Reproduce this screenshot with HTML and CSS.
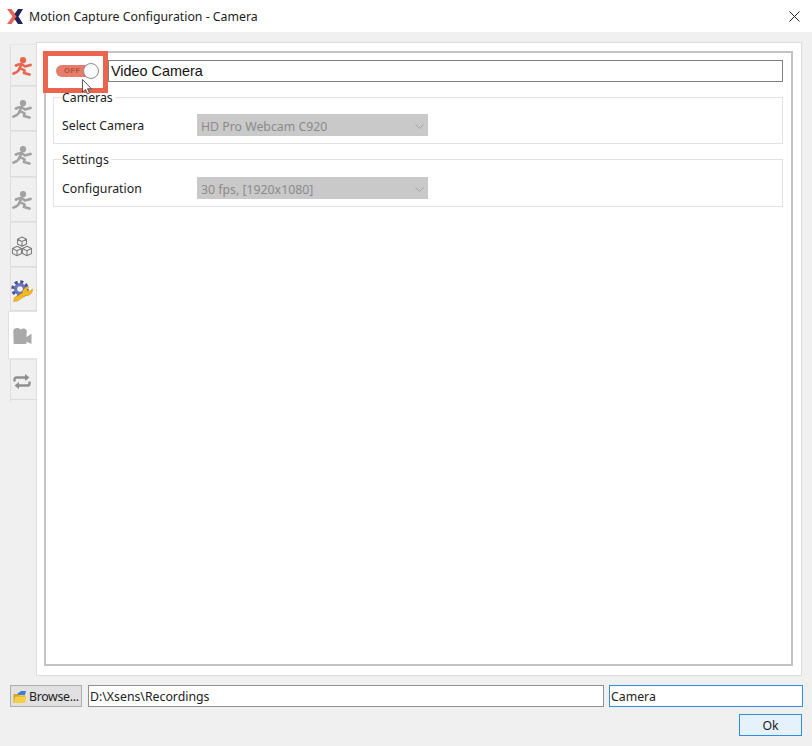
FILE: index.html
```html
<!DOCTYPE html>
<html lang="en">
<head>
<meta charset="utf-8">
<title>Motion Capture Configuration - Camera</title>
<link rel="stylesheet" href="styles.css">
</head>
<body>
<svg class="defs" width="0" height="0">
  <symbol id="runner" viewBox="0 0 20 20">
    <circle cx="11" cy="3.200" r="3.100" fill="currentColor"/>
    <path d="M9.500 7 Q6.500 7 4 8.500 M9.500 7 L7.500 11.500 Q11 12 12.500 13.500 L12 16 L17.500 17.500 M9.500 7 L13 9.500 L18.500 8 M7.500 11.500 Q6.500 15 1.500 16.500" fill="none" stroke="currentColor" stroke-width="2.700" stroke-linejoin="round" stroke-linecap="round"/>
  </symbol>
</svg>
<header class="titlebar">
  <svg class="logo" viewBox="0 0 16 15" width="16" height="15">
    <path d="M0 0 H4.500 L10 7.500 L4.500 15 H0 L5.500 7.500 Z" fill="#e9654f"/>
    <path d="M11 0 H16 L11.500 7.500 L16 15 H11 L7.500 10 L9.500 7.500 L7.500 5 Z" fill="#1f2557"/>
  </svg>
  <span class="title">Motion Capture Configuration - Camera</span>
  <svg class="close" viewBox="0 0 11 11" width="11" height="11"><path d="M0.500 0.500 L10.500 10.500 M10.500 0.500 L0.500 10.500" stroke="#222" stroke-width="1" fill="none"/></svg>
</header>

<main class="workspace">
  <nav class="tabs">
    <div class="tab tab-red"><svg class="ico-run"><use href="#runner"/></svg></div>
    <div class="tab"><svg class="ico-run"><use href="#runner"/></svg></div>
    <div class="tab"><svg class="ico-run"><use href="#runner"/></svg></div>
    <div class="tab"><svg class="ico-run"><use href="#runner"/></svg></div>
    <div class="tab">
      <svg class="ico" viewBox="0 0 22 21" width="22" height="21" fill="none" stroke="#7f7f7f" stroke-width="1.100" stroke-linejoin="round">
        <path d="M11 1 L15.500 3.200 V8 L11 10.200 L6.500 8 V3.200 Z M6.500 3.200 L11 5.500 L15.500 3.200 M11 5.500 V10.200"/>
        <path d="M6 10.200 L10.500 12.400 V17.500 L6 19.800 L1.500 17.500 V12.400 Z M1.500 12.400 L6 14.700 L10.500 12.400 M6 14.700 V19.800"/>
        <path d="M16 10.200 L20.500 12.400 V17.500 L16 19.800 L11.500 17.500 V12.400 Z M11.500 12.400 L16 14.700 L20.500 12.400 M16 14.700 V19.800"/>
      </svg>
    </div>
    <div class="tab">
      <svg class="ico" viewBox="0 0 22 22" width="22" height="22">
        <circle cx="9" cy="9" r="7" fill="none" stroke="#4a5199" stroke-width="3.500" stroke-dasharray="3 2.500"/>
        <circle cx="9" cy="9" r="6" fill="#6a74b8"/>
        <circle cx="9" cy="9" r="2.800" fill="#eef0fa"/>
        <path d="M2.500 21.500 L3.500 17.500 L11.500 13 C11.500 9 15 6.500 18 7 L15.800 10 L18 11.800 L21.500 9 C22 12.500 18.500 16.500 14.500 15.500 L6.500 21 Z" fill="#f5b921" stroke="#cf8f12" stroke-width="0.500"/>
      </svg>
    </div>
    <div class="tab tab-active">
      <svg class="ico" viewBox="0 0 19 16" width="19" height="16">
        <circle cx="4.200" cy="4" r="4" fill="#a9a9a9"/>
        <circle cx="10.300" cy="4" r="3.600" fill="#a9a9a9"/>
        <rect x="0.500" y="5.500" width="13" height="10.500" rx="1" fill="#a9a9a9"/>
        <path d="M13 9.500 L18.500 5.500 V16 L13 13.500 Z" fill="#a9a9a9"/>
      </svg>
    </div>
    <div class="tab">
      <svg class="ico" viewBox="0 0 18 15" width="18" height="15" fill="none" stroke="#8f8f8f" stroke-width="2.400">
        <path d="M1.500 7.500 V5.500 Q1.500 3.500 3.500 3.500 H12.500"/>
        <path d="M16.500 7.500 V9.500 Q16.500 11.500 14.500 11.500 H5.500"/>
        <path d="M12 0 L16.500 3.500 L12 7 Z M6 8 L1.500 11.500 L6 15 Z" fill="#8f8f8f" stroke="none"/>
      </svg>
    </div>
  </nav>

  <section class="pane">
    <div class="page">
      <div class="header-row">
        <div class="toggle"><span class="toggle-off">OFF</span><span class="knob"></span></div>
        <div class="name-input">Video Camera</div>
      </div>

      <div class="group group-cameras">
        <span class="legend">Cameras</span>
        <span class="label">Select Camera</span>
        <div class="combo"><span>HD Pro Webcam C920</span><svg viewBox="0 0 9 5" width="9" height="5"><path d="M0.500 0.500 L4.500 4.500 L8.500 0.500" fill="none" stroke="#a3a3a3"/></svg></div>
      </div>

      <div class="group group-settings">
        <span class="legend">Settings</span>
        <span class="label">Configuration</span>
        <div class="combo"><span>30 fps, [1920x1080]</span><svg viewBox="0 0 9 5" width="9" height="5"><path d="M0.500 0.500 L4.500 4.500 L8.500 0.500" fill="none" stroke="#a3a3a3"/></svg></div>
      </div>
    </div>
  </section>
</main>

<footer class="footer">
  <div class="path-row">
    <div class="browse">
      <svg viewBox="0 0 14 14" width="14" height="14">
        <path d="M4 4 L8 1 L13 1 L12 5 H4 Z" fill="#3f7fd0"/>
        <path d="M0.500 4 H5 L6 5.500 H12 V13 H0.500 Z" fill="#d9a520"/>
        <path d="M2.500 6.500 H13.500 L12 13 H0.500 Z" fill="#f7cf45"/>
      </svg>
      <span>Browse...</span>
    </div>
    <div class="field field-path">D:\Xsens\Recordings</div>
    <div class="field field-name">Camera</div>
  </div>
  <div class="ok-row"><div class="ok">Ok</div></div>
</footer>

<div class="highlight"></div>
<svg class="cursor" viewBox="0 0 11 16" width="11" height="16"><path d="M0.500 0.500 V13 L3.500 10.500 L5.500 15 L7.500 14 L5.500 9.800 H9.500 Z" fill="#fff" stroke="#333" stroke-width="0.800"/></svg>
</body>
</html>
```
FILE: styles.css
```css
* { box-sizing: border-box; }
html, body { margin: 0; padding: 0; }
body {
  position: relative;
  width: 812px;
  height: 746px;
  overflow: hidden;
  background: #f0f0f0;
  font-family: "Noto Sans", "Open Sans", sans-serif;
  font-size: 12.3px;
  color: #222;
  display: flex;
  flex-direction: column;
}
.defs { position: absolute; }

.titlebar {
  height: 32px;
  flex: none;
  background: #fff;
  display: flex;
  align-items: center;
  padding: 0 12px 0 7px;
}
.logo { flex: none; margin-right: 6px; }
.title { flex: 1; color: #1c1c1c; }
.close { flex: none; }

.workspace {
  flex: none;
  height: 644px;
  display: flex;
  padding: 10px 10px 0 10px;
}
.tabs {
  flex: none;
  width: 26px;
  margin-top: 2px;
  height: 358px;
  display: grid;
  grid-template-rows: 42px 45px 46px 45px 45px 44px 48px 41px;
  position: relative;
  z-index: 1;
  border-left: 1px solid #dedede;
}
.tab {
  display: flex;
  align-items: center;
  justify-content: center;
  padding: 3px 3px 0 0;
  border-bottom: 1px solid #dcdcdc;
  border-top: 1px solid #e4e4e4;
  color: #a2a2a2;
  background: #f0f0f0;
}
.tab-red { color: #e9654f; }
.tab-active {
  background: #fff;
  margin-left: -3px;
  margin-right: -1px;
  padding: 2px 1px 0 0;
  border-color: #e4e4e4;
  border-left: 1px solid #e0e0e0;
}
.ico-run { width: 20px; height: 20px; filter: blur(0.3px); }
.ico { filter: blur(0.3px); }

.pane {
  flex: 1;
  background: #fff;
  border: 1px solid #dcdcdc;
  padding: 8px 8px 9px 7px;
  display: flex;
}
.page {
  flex: 1;
  border: 2px solid #c2c2c8;
  padding: 7px 8px 0 7px;
}
.header-row {
  display: flex;
  align-items: center;
  height: 22px;
  margin-bottom: 15px;
}
.toggle {
  position: relative;
  flex: none;
  width: 44px;
  height: 16px;
  margin: 0 8px 0 3px;
}
.toggle::before {
  content: "";
  position: absolute;
  left: 0;
  top: 2px;
  width: 40px;
  height: 12px;
  border-radius: 6px;
  background: #e67c69;
}
.toggle-off {
  position: absolute;
  left: 8px;
  top: 3px;
  font: bold 7.500px/10px "Liberation Sans", sans-serif;
  letter-spacing: 0.600px;
  color: #b5503f;
}
.knob {
  position: absolute;
  right: 1px;
  top: 0;
  width: 16px;
  height: 16px;
  border-radius: 50%;
  background: #fafafa;
  border: 1.500px solid #8d8d8d;
}
.name-input {
  flex: 1;
  height: 22px;
  border: 1px solid #7f7f7f;
  padding-left: 2px;
  font: 14.400px/20px "Liberation Sans", Arial, sans-serif;
  color: #111;
}

.group {
  position: relative;
  display: flex;
  align-items: flex-start;
  border: 1px solid #e2e2e2;
  padding: 16px 8px 0 8px;
  margin-bottom: 15px;
}
.group-cameras { height: 47px; }
.group-settings { height: 48px; padding-top: 17px; }
.legend {
  position: absolute;
  left: 8px;
  top: -9px;
  line-height: 17px;
  background: #fff;
  padding-right: 2px;
}
.label { flex: none; width: 135px; line-height: 24px; }
.combo {
  flex: none;
  width: 231px;
  height: 22px;
  background: #c9c9c9;
  color: #8b8b8b;
  display: flex;
  align-items: center;
  justify-content: space-between;
  padding: 2px 4px 0 4px;
}

.footer {
  flex: 1;
  padding: 9px 9px 0 10px;
}
.path-row { display: flex; height: 22px; }
.browse {
  flex: none;
  width: 72px;
  background: #e1e1e1;
  border: 1px solid #adadad;
  display: flex;
  align-items: center;
  gap: 2px;
  padding: 1px 0 0 2px;
  letter-spacing: -0.300px;
  white-space: nowrap;
}
.field {
  background: #fff;
  line-height: 21px;
  padding-left: 1px;
}
.field-path {
  width: 516px;
  margin: 0 5px 0 6px;
  border: 1px solid #8f8f8f;
}
.field-name {
  width: 194px;
  border: 1px solid #2f8fdf;
}
.ok-row { display: flex; justify-content: flex-end; margin-top: 7px; padding-right: 1px; }
.ok {
  width: 63px;
  height: 22px;
  line-height: 21px;
  text-align: center;
  background: #e5f1fb;
  border: 1px solid #2f8fdf;
}

.highlight {
  position: absolute;
  left: 43px;
  top: 51px;
  width: 65px;
  height: 42px;
  border: 5px solid #e9654f;
}
.cursor {
  position: absolute;
  left: 82px;
  top: 79px;
}
```
